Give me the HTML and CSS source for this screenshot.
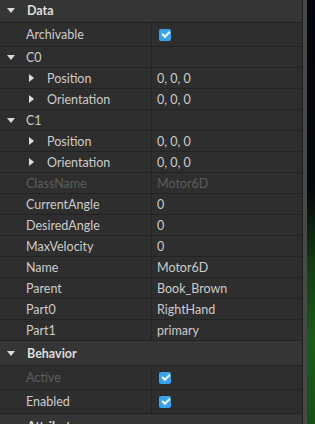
FILE: index.html
```html
<!DOCTYPE html>
<html lang="en">
<head>
    <meta charset="UTF-8">
    <meta name="viewport" content="width=device-width, initial-scale=1.0">
    <title>Properties - Motor6D</title>
    <link rel="stylesheet" href="styles.css">
</head>
<body>
    <div class="window">
        <div class="panel">
            <div class="props">
                <div class="section"><span class="caret down"></span>Data</div>
                <div class="row tall">
                    <div class="name">Archivable</div>
                    <div class="value"><span class="check"></span></div>
                </div>
                <div class="row">
                    <div class="name group"><span class="caret down"></span>C0</div>
                    <div class="value"></div>
                </div>
                <div class="row">
                    <div class="name child"><span class="caret right"></span>Position</div>
                    <div class="value">0, 0, 0</div>
                </div>
                <div class="row">
                    <div class="name child"><span class="caret right"></span>Orientation</div>
                    <div class="value">0, 0, 0</div>
                </div>
                <div class="row">
                    <div class="name group"><span class="caret down"></span>C1</div>
                    <div class="value"></div>
                </div>
                <div class="row">
                    <div class="name child"><span class="caret right"></span>Position</div>
                    <div class="value">0, 0, 0</div>
                </div>
                <div class="row">
                    <div class="name child"><span class="caret right"></span>Orientation</div>
                    <div class="value">0, 0, 0</div>
                </div>
                <div class="row disabled">
                    <div class="name">ClassName</div>
                    <div class="value">Motor6D</div>
                </div>
                <div class="row">
                    <div class="name">CurrentAngle</div>
                    <div class="value">0</div>
                </div>
                <div class="row">
                    <div class="name">DesiredAngle</div>
                    <div class="value">0</div>
                </div>
                <div class="row">
                    <div class="name">MaxVelocity</div>
                    <div class="value">0</div>
                </div>
                <div class="row">
                    <div class="name">Name</div>
                    <div class="value">Motor6D</div>
                </div>
                <div class="row">
                    <div class="name">Parent</div>
                    <div class="value">Book_Brown</div>
                </div>
                <div class="row">
                    <div class="name">Part0</div>
                    <div class="value">RightHand</div>
                </div>
                <div class="row">
                    <div class="name">Part1</div>
                    <div class="value">primary</div>
                </div>
                <div class="section"><span class="caret down"></span>Behavior</div>
                <div class="row tall disabled">
                    <div class="name">Active</div>
                    <div class="value"><span class="check"></span></div>
                </div>
                <div class="row tall">
                    <div class="name">Enabled</div>
                    <div class="value"><span class="check"></span></div>
                </div>
                <div class="section"><span class="caret down"></span>Attributes</div>
            </div>
        </div>
        <div class="scrollbar"></div>
        <div class="backdrop"></div>
    </div>
</body>
</html>
```

FILE: styles.css
```css
body {
    margin: 0;
    overflow: hidden;
    background-color: #2e2e2e;
    font-family: "Lato", "Open Sans", sans-serif;
    font-size: 12.5px;
    color: #cccccc;
}

.window {
    display: flex;
    width: 315px;
    height: 424px;
    overflow: hidden;
}

.panel {
    width: 302px;
    border-right: 1px solid #1f1f1f;
    background-color: #2e2e2e;
    overflow: hidden;
}

.props {
    margin-top: -2px; /* scrolled a little */
}

.section {
    display: flex;
    align-items: center;
    height: 24px;
    padding-left: 7px;
    background-color: #353535;
    border-bottom: 1px solid #232323;
    font-weight: bold;
    color: #dddddd;
}

.section .caret {
    margin-right: 12px;
}

.row {
    display: grid;
    grid-template-columns: 152px 1fr;
    height: 20px;
    border-bottom: 1px solid #232323;
}

.row.tall {
    height: 23px;
}

.name {
    display: flex;
    align-items: center;
    padding-left: 26px;
    border-right: 1px solid #232323;
    white-space: nowrap;
}

.name.group {
    padding-left: 7px;
}

.name.group .caret {
    margin-right: 11px;
}

.name.child {
    padding-left: 29px;
}

.name.child .caret {
    margin-right: 13px;
}

.value {
    display: flex;
    align-items: center;
    padding-left: 5px;
    white-space: nowrap;
}

.row.disabled .name,
.row.disabled .value {
    color: #5c5c5c;
}

.caret {
    display: inline-block;
    width: 0;
    height: 0;
}

.caret.down {
    border-left: 4px solid transparent;
    border-right: 4px solid transparent;
    border-top: 5px solid #d8d8d8;
}

.caret.right {
    border-top: 4px solid transparent;
    border-bottom: 4px solid transparent;
    border-left: 5px solid #e0e0e0;
}

.check {
    position: relative;
    display: inline-block;
    width: 12px;
    height: 12px;
    margin-left: 2px;
    border-radius: 2px;
    background-color: #35a3ee;
}

/* white tick inside the box */
.check::after {
    content: "";
    position: absolute;
    left: 3px;
    top: 2px;
    width: 6px;
    height: 3px;
    border-left: 2px solid #ffffff;
    border-bottom: 2px solid #ffffff;
    transform: rotate(-45deg);
}

.scrollbar {
    width: 4px;
    background-color: #484848;
}

.backdrop {
    flex: 1;
    background: linear-gradient(#03040c 0%, #05080a 45%, #143a14 62%, #1c5a1c 80%, #16501a 100%);
}
```
